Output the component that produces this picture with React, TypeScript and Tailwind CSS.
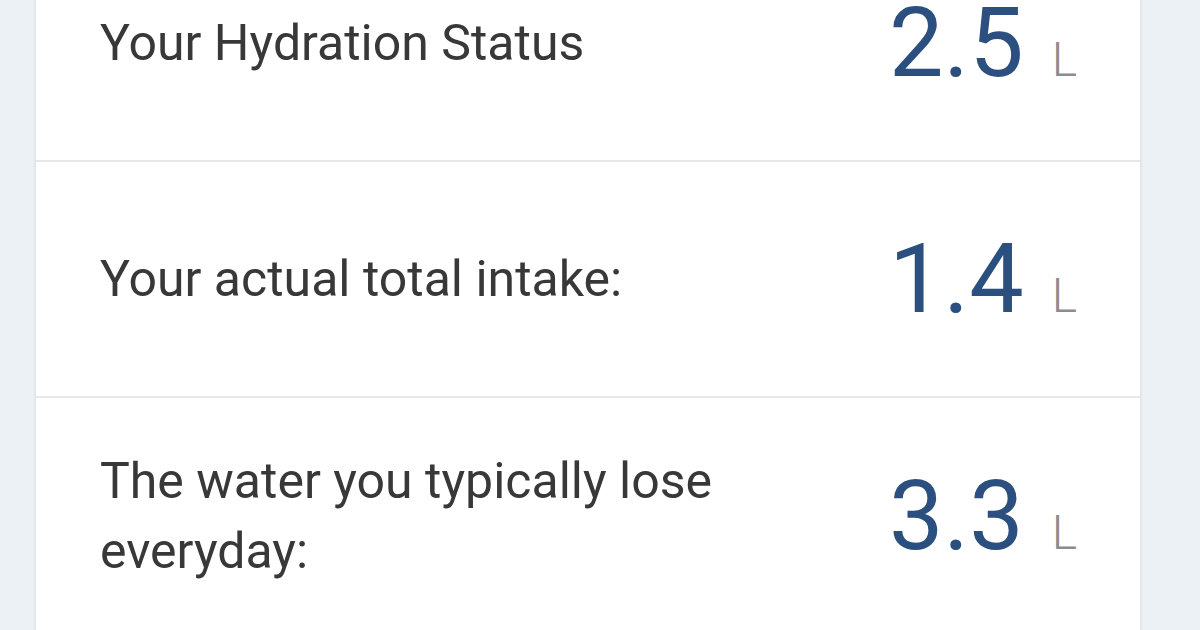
import React from "react";

const rows = [
  { label: "Your Hydration Status", value: "2.5" },
  { label: "Your actual total intake:", value: "1.4" },
  { label: "The water you typically lose everyday:", value: "3.3" },
];

export default function App() {
  return (
    <div
      className="w-[1200px] h-[630px] overflow-hidden bg-[#ecf1f6]"
      style={{ fontFamily: "Roboto, 'Liberation Sans', sans-serif" }}
    >
      <div className="ml-[36px] w-[1104px] -mt-[74px] bg-white shadow-[0_0_4px_rgba(0,0,0,0.12)]">
        {rows.map((r, i) => (
          <div
            key={r.value}
            className={`flex items-center justify-between h-[236px] pl-[64px] pr-[63px] ${
              i < rows.length - 1 ? "border-b-2 border-[#e6e8ea]" : ""
            }`}
          >
            <div className="max-w-[680px] text-[50px] leading-[70px] text-[#383838]">
              {r.label}
            </div>
            <div className="flex items-baseline shrink-0">
              <span className="text-[97px] leading-none text-[#2b4f7e]">{r.value}</span>
              <span className="ml-[28px] text-[48px] leading-none font-light text-[#8c8c8c]">L</span>
            </div>
          </div>
        ))}
      </div>
    </div>
  );
}
